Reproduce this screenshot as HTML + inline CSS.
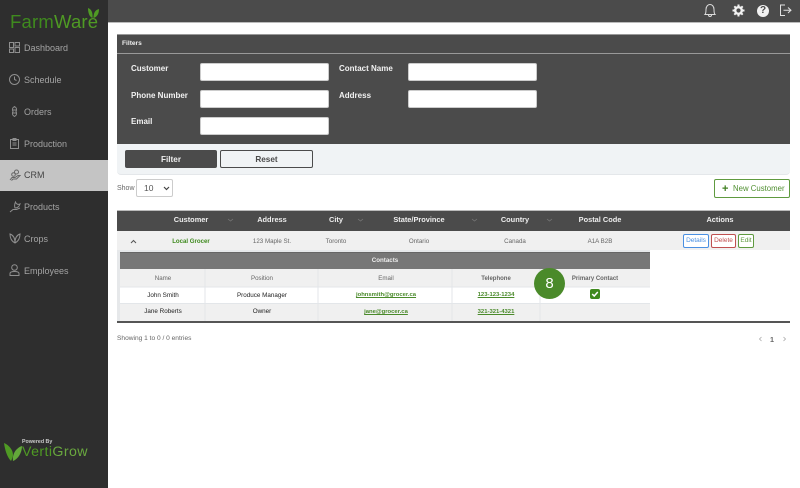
<!DOCTYPE html>
<html><head><meta charset="utf-8"><style>
*{box-sizing:border-box}
html,body{margin:0;padding:0}
body{width:800px;height:488px;overflow:hidden;background:#fff;position:relative;font-family:"Liberation Sans",sans-serif;color:#333}
.a{position:absolute;white-space:nowrap}
.c{text-align:center}
#side{left:0;top:0;width:108px;height:488px;background:#2e2e2e}
#top{left:108px;top:0;width:692px;height:23px;background:#4b4b4b;border-bottom:1px solid #bbb}
.nav{left:24px;font-size:9px;color:#a4a4a4;line-height:12px}
.ic{position:absolute;fill:none;stroke:#8f8f8f;stroke-width:1}
.lab{font-size:8px;font-weight:bold;color:#f2f2f2;line-height:10px}
.inp{position:absolute;width:129px;height:18px;background:#fff;border-radius:2px;border:1px solid #ccc}
.th{font-size:7.400px;font-weight:bold;color:#eee;line-height:10px}
.td{font-size:6.200px;color:#666;line-height:8px}
.sh{font-size:6px;color:#666;font-weight:bold;line-height:8px}
.nm{font-size:6.300px;color:#222;line-height:8px}
.lk{font-size:5.900px;color:#4a8a2a;text-decoration:underline;line-height:8px;font-weight:bold}
.btn{position:absolute;top:234px;height:14px;border-radius:2px;font-size:6.500px;line-height:12px;text-align:center;background:#fff;border:1px solid}
</style></head><body>

<div class="a" id="side"></div>
<div class="a" id="top"></div>

<!-- logo -->
<div class="a" style="left:10px;top:10px;font-size:18.500px;line-height:23px;color:#3f8a1e;letter-spacing:.2px">Farm<span style="color:#4f9a24">Ware</span></div>
<svg class="a" style="left:86px;top:7px" width="14" height="13" viewBox="0 0 14 13"><path d="M2 1C5 2 7 5 6.500 11C3.500 10 2 6 2 1Z" fill="#4f9a24"/><path d="M13 2C13 7 11 10 7.500 11C7.500 6 9 3 13 2Z" fill="#4f9a24"/></svg>

<!-- nav -->
<div class="a" style="left:0;top:160px;width:108px;height:31px;background:#c4c4c4"></div>
<svg class="ic" style="left:9px;top:42px" width="11" height="11" viewBox="0 0 11 11"><rect x=".5" y=".5" width="4" height="5"/><rect x="6" y=".5" width="4.500" height="3.500"/><rect x=".5" y="7" width="4" height="3.500"/><rect x="6" y="5.500" width="4.500" height="5"/></svg>
<div class="a nav" style="top:42px">Dashboard</div>
<svg class="ic" style="left:9px;top:74px" width="11" height="11" viewBox="0 0 11 11"><circle cx="5.500" cy="5.500" r="5"/><path d="M5.500 2.500V5.500L7.500 6.500"/></svg>
<div class="a nav" style="top:74px">Schedule</div>
<svg class="ic" style="left:11px;top:106px" width="7" height="11" viewBox="0 0 7 11"><path d="M3.500 .5C6 2 6 3.500 5 5.500C6 7.500 6 9 3.500 10.500C1 9 1 7.500 2 5.500C1 3.500 1 2 3.500 .5ZM1.500 4H5.500M1.500 7H5.500"/></svg>
<div class="a nav" style="top:106px">Orders</div>
<svg class="ic" style="left:10px;top:138px" width="9" height="11" viewBox="0 0 9 11"><rect x=".5" y="1.500" width="8" height="9"/><rect x="3" y=".5" width="3" height="2"/><path d="M2.500 5H6.500M2.500 7H6.500"/></svg>
<div class="a nav" style="top:138px">Production</div>
<svg class="ic" style="left:9px;top:169px;stroke:#666" width="12" height="12" viewBox="0 0 12 12"><circle cx="7.500" cy="3" r="2"/><circle cx="4.500" cy="5.500" r="1.800"/><path d="M1 11L3 8.500H6L9 6.500H11L7.500 10H4L2.500 11.500"/></svg>
<div class="a nav" style="top:169px;color:#444">CRM</div>
<svg class="ic" style="left:9px;top:201px" width="12" height="12" viewBox="0 0 12 12"><path d="M1 11L4 8.500H7.500L11 7M6 7C5 4 6 2 6.500 1C7 3 9 4 11 3C10 6 8 7 6 7Z"/></svg>
<div class="a nav" style="top:201px">Products</div>
<svg class="ic" style="left:9px;top:233px" width="12" height="11" viewBox="0 0 12 11"><path d="M6 10C2 8 1 5 1 1C4 2 6 5 6 10C6 5 8 2 11 1C11 5 10 8 6 10Z"/></svg>
<div class="a nav" style="top:233px">Crops</div>
<svg class="ic" style="left:9px;top:264px" width="11" height="12" viewBox="0 0 11 12"><circle cx="5.500" cy="3.500" r="2.800"/><path d="M1 11.500V9.500C1 8 3 7.500 5.500 7.500C8 7.500 10 8 10 9.500V11.500Z"/></svg>
<div class="a nav" style="top:265px">Employees</div>

<!-- powered by -->
<svg class="a" style="left:3px;top:442px" width="20" height="20" viewBox="0 0 20 20"><path d="M1 1C6 3 10 8 10 13C10 15 9 17 8 19C4 15 2 8 1 1Z" fill="#4f9a24"/><path d="M19 4C19 11 15 17 10 19C9 12 13 6 19 4Z" fill="#63a83a"/></svg>
<div class="a" style="left:22px;top:439px;font-size:5.300px;line-height:7px;color:#ccc;font-weight:bold">Powered By</div>
<div class="a" style="left:22px;top:444px;font-size:14.200px;line-height:17px;color:#4f9a24;letter-spacing:.4px">Verti<span style="color:#6aa83f">Grow</span></div>

<!-- top icons -->
<svg class="a" style="left:703px;top:3px" width="14" height="15" viewBox="0 0 14 15"><path d="M2 11.500C3 10.500 3 9 3 6.500C3 3.500 4.800 1.500 7 1.500C9.200 1.500 11 3.500 11 6.500C11 9 11 10.500 12 11.500ZM5.500 12C5.500 14 8.500 14 8.500 12" fill="none" stroke="#ddd" stroke-width="1"/></svg>
<svg class="a" style="left:732px;top:4px" width="13" height="13" viewBox="0 0 13 13"><circle cx="6.500" cy="6.500" r="3.300" fill="none" stroke="#f2f2f2" stroke-width="2.400"/><path d="M6.500 .5V2.500M6.500 10.500V12.500M.5 6.500H2.500M10.500 6.500H12.500M2.300 2.300L3.700 3.700M9.300 9.300L10.700 10.700M2.300 10.700L3.700 9.300M9.300 3.700L10.700 2.300" stroke="#f2f2f2" stroke-width="2"/></svg>
<div class="a" style="left:757px;top:5px;width:12px;height:12px;border-radius:50%;background:#f2f2f2"></div>
<div class="a c" style="left:757px;top:5px;width:12px;font-size:10px;line-height:12px;font-weight:bold;color:#4b4b4b">?</div>
<svg class="a" style="left:779px;top:4px" width="13" height="13" viewBox="0 0 13 13"><path d="M6 1H1.500V11.500H6M4.500 6.200H11.500M9 3.500L12 6.200L9 9" fill="none" stroke="#e2e2e2" stroke-width="1"/></svg>

<!-- filters -->
<div class="a" style="left:117px;top:34px;width:673px;height:110px;background:#4b4b4b;border-top:1px solid #999"></div>
<div class="a" style="left:117px;top:53px;width:673px;height:1px;background:#999"></div>
<div class="a" style="left:117px;top:144px;width:673px;height:31px;background:#f0f3f5;border-radius:0 0 4px 4px;border-bottom:1px solid #e4e7ea"></div>
<div class="a" style="left:122px;top:39px;font-size:6.600px;font-weight:bold;color:#eee;line-height:10px">Filters</div>
<div class="a lab" style="left:131px;top:64px">Customer</div>
<div class="a lab" style="left:131px;top:91px">Phone Number</div>
<div class="a lab" style="left:131px;top:117px">Email</div>
<div class="a lab" style="left:339px;top:64px">Contact Name</div>
<div class="a lab" style="left:339px;top:91px">Address</div>
<div class="inp" style="left:200px;top:63px"></div>
<div class="inp" style="left:200px;top:90px"></div>
<div class="inp" style="left:200px;top:117px"></div>
<div class="inp" style="left:408px;top:63px"></div>
<div class="inp" style="left:408px;top:90px"></div>
<div class="a c" style="left:125px;top:150px;width:92px;height:18px;background:#4b4b4b;border-radius:2px;font-size:8.200px;font-weight:bold;color:#eee;line-height:19px">Filter</div>
<div class="a c" style="left:220px;top:150px;width:93px;height:18px;background:#f0f3f5;border:1px solid #4b4b4b;border-radius:2px;font-size:8.200px;font-weight:bold;color:#4b4b4b;line-height:17px">Reset</div>

<!-- show -->
<div class="a" style="left:117px;top:184px;font-size:7px;color:#666;line-height:9px">Show</div>
<div class="a" style="left:136px;top:179px;width:37px;height:18px;border:1px solid #ccc;border-radius:2px;background:#fff;font-size:8.500px;color:#555;line-height:17px;padding-left:7px">10</div>
<svg class="a" style="left:163px;top:186px" width="7" height="5" viewBox="0 0 7 5"><path d="M1 1L3.500 3.500L6 1" fill="none" stroke="#444" stroke-width="1.200"/></svg>

<!-- new customer -->
<div class="a" style="left:714px;top:179px;width:76px;height:19px;border:1px solid #5f9a3f;border-radius:2px;background:#fff"></div>
<div class="a" style="left:722px;top:183px;font-size:11px;font-weight:bold;color:#3f7f20;line-height:12px">+</div>
<div class="a" style="left:733px;top:184px;font-size:7.800px;color:#4f8f30;line-height:10px">New Customer</div>

<!-- table -->
<div class="a" style="left:117px;top:210px;width:673px;height:21px;background:#4b4b4b;border-top:1px solid #bbb"></div>
<div class="a th c" style="left:161px;top:215px;width:60px">Customer</div>
<div class="a th c" style="left:247px;top:215px;width:50px">Address</div>
<div class="a th c" style="left:316px;top:215px;width:40px">City</div>
<div class="a th c" style="left:379px;top:215px;width:80px">State/Province</div>
<div class="a th c" style="left:485px;top:215px;width:60px">Country</div>
<div class="a th c" style="left:570px;top:215px;width:60px">Postal Code</div>
<div class="a th c" style="left:690px;top:215px;width:60px">Actions</div>
<svg class="a" style="left:0;top:0" width="800" height="230"><path d="M228 219L230.500 221L233 219M358 219L360.500 221L363 219M472 219L474.500 221L477 219M547 219L549.500 221L552 219" fill="none" stroke="#777" stroke-width=".8"/></svg>

<div class="a" style="left:117px;top:231px;width:673px;height:19px;background:#f0f0f0"></div>
<svg class="a" style="left:130px;top:239px" width="7" height="5" viewBox="0 0 7 5"><path d="M1 4L3.500 1.500L6 4" fill="none" stroke="#555" stroke-width="1"/></svg>
<div class="a c" style="left:161px;top:238px;width:60px;font-size:6.100px;font-weight:bold;color:#3f8a1e;line-height:8px">Local Grocer</div>
<div class="a td c" style="left:242px;top:238px;width:60px">123 Maple St.</div>
<div class="a td c" style="left:316px;top:238px;width:40px">Toronto</div>
<div class="a td c" style="left:389px;top:238px;width:60px">Ontario</div>
<div class="a td c" style="left:485px;top:238px;width:60px">Canada</div>
<div class="a td c" style="left:570px;top:238px;width:60px">A1A B2B</div>
<div class="btn" style="left:683px;width:26px;border-color:#4a90e2;color:#4a90e2">Details</div>
<div class="btn" style="left:711px;width:25px;border-color:#c05050;color:#c05050">Delete</div>
<div class="btn" style="left:738px;width:16px;border-color:#5f9a3f;color:#5f9a3f">Edit</div>

<!-- contacts -->
<div class="a" style="left:117px;top:250px;width:533px;height:72px;background:#e6e8ea"></div>
<div class="a" style="left:120px;top:252px;width:530px;height:17px;background:#777;border-top:1px solid #666"></div>
<div class="a c" style="left:355px;top:257px;width:60px;font-size:6.200px;font-weight:bold;color:#eee;line-height:8px">Contacts</div>
<div class="a" style="left:120px;top:269px;width:530px;height:18px;background:#f0f0f0"></div>
<div class="a" style="left:120px;top:287px;width:530px;height:16px;background:#fff"></div>
<div class="a" style="left:120px;top:304px;width:530px;height:17px;background:#f0f0f0"></div>
<svg class="a" style="left:0;top:0" width="800" height="330"><path d="M205 269V321M318 269V321M452 269V321M540 269V321" stroke="#e3e6e9" stroke-width="1"/><path d="M120 287H650M120 303.500H650" stroke="#e3e6e9" stroke-width="1"/></svg>
<div class="a sh c" style="left:133px;top:275px;width:60px;font-weight:normal;font-size:6.200px">Name</div>
<div class="a sh c" style="left:232px;top:275px;width:60px;font-weight:normal;font-size:6.200px">Position</div>
<div class="a sh c" style="left:356px;top:275px;width:60px;font-weight:normal;font-size:6.200px">Email</div>
<div class="a sh c" style="left:466px;top:275px;width:60px">Telephone</div>
<div class="a sh c" style="left:565px;top:275px;width:60px">Primary Contact</div>
<div class="a nm c" style="left:133px;top:292px;width:60px">John Smith</div>
<div class="a nm c" style="left:222px;top:292px;width:80px">Produce Manager</div>
<div class="a lk c" style="left:346px;top:291px;width:80px">johnsmith@grocer.ca</div>
<div class="a lk c" style="left:466px;top:291px;width:60px">123-123-1234</div>
<div class="a nm c" style="left:133px;top:308px;width:60px">Jane Roberts</div>
<div class="a nm c" style="left:232px;top:308px;width:60px">Owner</div>
<div class="a lk c" style="left:346px;top:308px;width:80px">jane@grocer.ca</div>
<div class="a lk c" style="left:466px;top:308px;width:60px">321-321-4321</div>
<div class="a" style="left:590px;top:289px;width:10px;height:10px;background:#3f8a1e;border-radius:2px"></div>
<svg class="a" style="left:590px;top:289px" width="10" height="10" viewBox="0 0 10 10"><path d="M2.200 5L4.200 7L7.800 3" fill="none" stroke="#fff" stroke-width="1.500"/></svg>
<div class="a" style="left:117px;top:321px;width:673px;height:1.500px;background:#555"></div>

<!-- badge -->
<div class="a c" style="left:534px;top:268px;width:31px;height:31px;border-radius:50%;background:#4a8a2a;color:#fff;font-size:15px;line-height:31px">8</div>

<!-- footer -->
<div class="a" style="left:117px;top:334px;font-size:6.600px;color:#666;line-height:9px">Showing 1 to 0 / 0 entries</div>
<svg class="a" style="left:0;top:330px" width="800" height="20"><path d="M761.500 7L759.500 9L761.500 11M783.500 7L785.500 9L783.500 11" fill="none" stroke="#aaa" stroke-width=".8"/></svg>
<div class="a c" style="left:767px;top:335px;width:10px;font-size:7.200px;font-weight:bold;color:#666;line-height:9px">1</div>
</body></html>
